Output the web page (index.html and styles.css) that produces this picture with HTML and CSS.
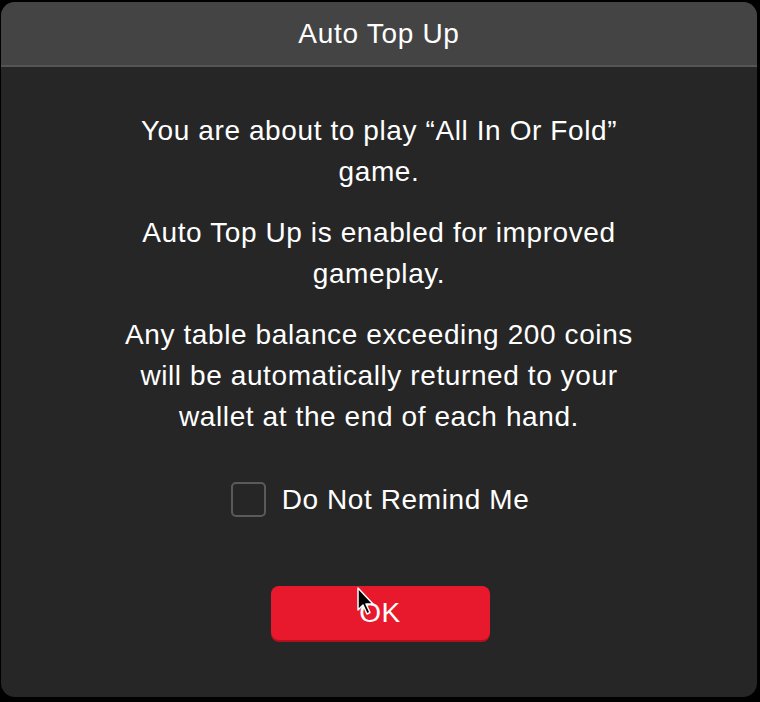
FILE: index.html
```html
<!DOCTYPE html>
<html>

<head>
    <meta name="viewport" content="width=device-width, initial-scale=1.0" charset="utf-8">
    <link rel="stylesheet" href="styles.css">
</head>

<body>
    <div class="dialog">
        <div class="header">Auto Top Up</div>
        <div class="content">
            <p>You are about to play &ldquo;All In Or Fold&rdquo; game.</p>
            <p>Auto Top Up is enabled for improved gameplay.</p>
            <p>Any table balance exceeding 200 coins will be automatically returned to your wallet at the end of each hand.</p>

            <label class="remind">
                <span class="box"></span>
                <span>Do Not Remind Me</span>
            </label>

            <div class="actions">
                <button class="button">OK</button>
                <svg class="cursor" width="20" height="30" viewBox="0 0 20 30">
                    <path d="M2 1 L2 23 L7 18 L11 27 L14 25.5 L10 17 L17 17 Z" fill="#000" stroke="#fff" stroke-width="1.5" stroke-linejoin="round" />
                </svg>
            </div>
        </div>
    </div>
</body>

</html>
```

FILE: styles.css
```css
body {
    margin: 0;
    background-color: #000;
    font-family: "Liberation Sans", Arial, sans-serif;
    color: #fff;
}

.dialog {
    width: 756px;
    height: 695px;
    margin: 2px 0 0 1px;
    background-color: #262626;
    border-radius: 14px;
    overflow: hidden;
}

.header {
    height: 63px;
    line-height: 63px;
    text-align: center;
    font-size: 28px;
    letter-spacing: 0.7px;
    background-color: #444;
    border-bottom: 2px solid #555;
}

.content {
    display: flex;
    flex-direction: column;
    align-items: center;
    padding-top: 43px;
}

.content p {
    max-width: 520px;
    margin: 0 0 20px 0;
    text-align: center;
    font-size: 28px;
    letter-spacing: 0.6px;
    line-height: 41px;
}

.remind {
    display: flex;
    align-items: center;
    gap: 16px;
    margin-top: 25px;
    margin-left: 2px;
    font-size: 28px;
    letter-spacing: 0.6px;
}

.box {
    width: 31px;
    height: 31px;
    border: 2px solid #5a5a5a;
    border-radius: 5px;
}

.actions {
    position: relative;
    margin-top: 69px;
    margin-left: 2px;
}

.button {
    width: 219px;
    height: 54px;
    background-color: #e8192c;
    color: #fff;
    border: none;
    border-radius: 8px;
    font-family: "Liberation Sans", Arial, sans-serif;
    font-size: 28px;
    letter-spacing: 0.6px;
    box-shadow: 0 2px 0 #b3101f;
}

.cursor {
    position: absolute;
    left: 85px;
    top: 1px;
}
```
